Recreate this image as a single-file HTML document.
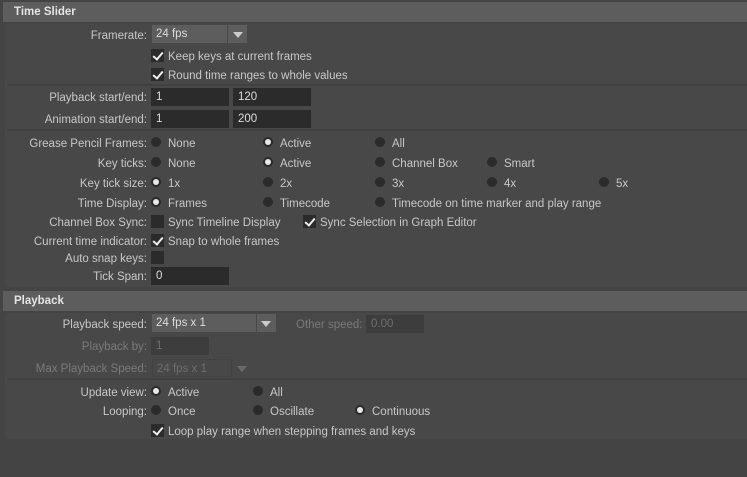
<!DOCTYPE html>
<html><head><style>
body{margin:0;width:747px;height:477px;background:#444;font-family:"Liberation Sans",sans-serif;font-size:11.5px;color:#c8c8c8;position:relative;overflow:hidden}
div,span{position:absolute;box-sizing:border-box}
.hdr{left:3px;right:0;height:20px;background:#5d5d5d;color:#e4e4e4;font-weight:bold;padding:4px 0 0 11px;font-size:11.5px}
.body{left:5px;right:0;background:#484848}
.sep{left:7px;right:0;height:2px;background:#414141}
.lbl{right:600px;text-align:right;white-space:nowrap;margin-top:2px}
.t{white-space:nowrap;margin-top:2px}
.dis{color:#7a7a7a}
.fld{background:#2b2b2b;height:18px;padding:3px 0 0 5px;color:#ddd}
.dd{background:#5d5d5d;height:18px;padding:3px 0 0 4px;color:#ddd}
.arr{width:0;height:0;border-left:5px solid transparent;border-right:5px solid transparent;border-top:6px solid #ccc}
.rb{width:10px;height:10px;border-radius:50%;background:#2a2a2a}
.rb.on::after{content:"";position:absolute;left:2px;top:2px;width:6px;height:6px;border-radius:50%;background:#e8e8e8}
.cb{width:13px;height:13px;background:#2b2b2b}
.cb.on::after{content:"";position:absolute;left:4px;top:1px;width:4px;height:8px;border:solid #eee;border-width:0 2px 2px 0;transform:rotate(40deg)}
</style></head><body>
<div class="hdr" style="top:2px">Time Slider</div>
<div class="body" style="top:24px;height:263px"></div>
<div class="sep" style="top:84px"></div>
<div class="sep" style="top:129px"></div>
<div class="hdr" style="top:291px">Playback</div>
<div class="body" style="top:313px;height:126px"></div>
<div class="sep" style="top:378px"></div>

<span class="lbl" style="top:28px">Framerate:</span>
<div class="dd" style="left:152px;top:25px;width:75px">24 fps</div>
<div class="dd" style="left:228px;top:25px;width:19px"></div>
<div class="arr" style="left:233px;top:32px"></div>

<div class="cb on" style="left:151px;top:49px"></div><span class="t" style="left:168px;top:49px">Keep keys at current frames</span>
<div class="cb on" style="left:151px;top:68px"></div><span class="t" style="left:168px;top:68px">Round time ranges to whole values</span>

<span class="lbl" style="top:90px">Playback start/end:</span>
<div class="fld" style="left:151px;top:88px;width:78px">1</div>
<div class="fld" style="left:233px;top:88px;width:78px">120</div>
<span class="lbl" style="top:112px">Animation start/end:</span>
<div class="fld" style="left:151px;top:110px;width:78px">1</div>
<div class="fld" style="left:233px;top:110px;width:78px">200</div>

<span class="lbl" style="top:136px">Grease Pencil Frames:</span>
<div class="rb" style="left:151px;top:137px"></div><span class="t" style="left:168px;top:136px">None</span>
<div class="rb on" style="left:263px;top:137px"></div><span class="t" style="left:280px;top:136px">Active</span>
<div class="rb" style="left:375px;top:137px"></div><span class="t" style="left:392px;top:136px">All</span>

<span class="lbl" style="top:156px">Key ticks:</span>
<div class="rb" style="left:151px;top:157px"></div><span class="t" style="left:168px;top:156px">None</span>
<div class="rb on" style="left:263px;top:157px"></div><span class="t" style="left:280px;top:156px">Active</span>
<div class="rb" style="left:375px;top:157px"></div><span class="t" style="left:392px;top:156px">Channel Box</span>
<div class="rb" style="left:487px;top:157px"></div><span class="t" style="left:504px;top:156px">Smart</span>

<span class="lbl" style="top:176px">Key tick size:</span>
<div class="rb on" style="left:151px;top:177px"></div><span class="t" style="left:168px;top:176px">1x</span>
<div class="rb" style="left:263px;top:177px"></div><span class="t" style="left:280px;top:176px">2x</span>
<div class="rb" style="left:375px;top:177px"></div><span class="t" style="left:392px;top:176px">3x</span>
<div class="rb" style="left:487px;top:177px"></div><span class="t" style="left:504px;top:176px">4x</span>
<div class="rb" style="left:599px;top:177px"></div><span class="t" style="left:616px;top:176px">5x</span>

<span class="lbl" style="top:196px">Time Display:</span>
<div class="rb on" style="left:151px;top:197px"></div><span class="t" style="left:168px;top:196px">Frames</span>
<div class="rb" style="left:263px;top:197px"></div><span class="t" style="left:280px;top:196px">Timecode</span>
<div class="rb" style="left:375px;top:197px"></div><span class="t" style="left:392px;top:196px">Timecode on time marker and play range</span>

<span class="lbl" style="top:215px">Channel Box Sync:</span>
<div class="cb" style="left:151px;top:215px"></div><span class="t" style="left:168px;top:215px">Sync Timeline Display</span>
<div class="cb on" style="left:303px;top:215px"></div><span class="t" style="left:320px;top:215px">Sync Selection in Graph Editor</span>

<span class="lbl" style="top:234px">Current time indicator:</span>
<div class="cb on" style="left:151px;top:234px"></div><span class="t" style="left:168px;top:234px">Snap to whole frames</span>

<span class="lbl" style="top:251px">Auto snap keys:</span>
<div class="cb" style="left:151px;top:251px"></div>

<span class="lbl" style="top:269px">Tick Span:</span>
<div class="fld" style="left:151px;top:267px;width:78px">0</div>

<span class="lbl" style="top:317px">Playback speed:</span>
<div class="dd" style="left:152px;top:314px;width:104px">24 fps x 1</div>
<div class="dd" style="left:257px;top:314px;width:19px"></div>
<div class="arr" style="left:261px;top:321px"></div>
<span class="t dis" style="left:296px;top:317px">Other speed:</span>
<div class="fld dis" style="left:366px;top:315px;width:58px;background:#3d3d3d;color:#6e6e6e">0.00</div>

<span class="lbl dis" style="top:339px">Playback by:</span>
<div class="fld" style="left:151px;top:337px;width:58px;background:#3d3d3d;color:#6e6e6e">1</div>

<span class="lbl dis" style="top:361px">Max Playback Speed:</span>
<div class="dd" style="left:152px;top:359px;width:80px;background:#484848;color:#6e6e6e;border:1px solid #424242">24 fps x 1</div>
<div class="arr" style="left:237px;top:366px;border-top-color:#6a6a6a"></div>

<span class="lbl" style="top:385px">Update view:</span>
<div class="rb on" style="left:151px;top:386px"></div><span class="t" style="left:168px;top:385px">Active</span>
<div class="rb" style="left:253px;top:386px"></div><span class="t" style="left:270px;top:385px">All</span>

<span class="lbl" style="top:404px">Looping:</span>
<div class="rb" style="left:151px;top:405px"></div><span class="t" style="left:168px;top:404px">Once</span>
<div class="rb" style="left:253px;top:405px"></div><span class="t" style="left:270px;top:404px">Oscillate</span>
<div class="rb on" style="left:355px;top:405px"></div><span class="t" style="left:372px;top:404px">Continuous</span>

<div class="cb on" style="left:151px;top:424px"></div><span class="t" style="left:168px;top:424px">Loop play range when stepping frames and keys</span>
</body></html>
